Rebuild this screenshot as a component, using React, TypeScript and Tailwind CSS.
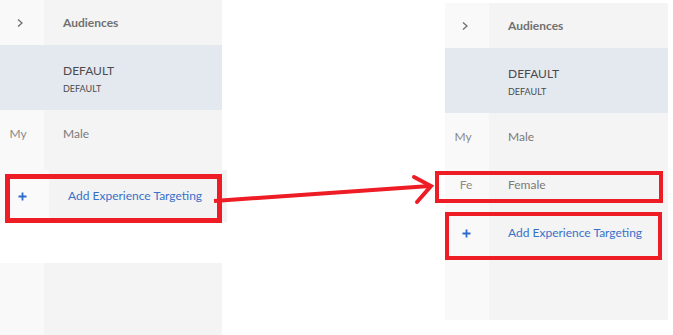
import React from "react";

const font = { fontFamily: "Lato, 'Open Sans', sans-serif" };

function Row({
  h,
  left,
  right,
  bg,
  leftBg = "bg-[#f9f9f9]",
  rightBg = "bg-[#f4f4f4]",
  leftW = "w-[44px]",
}: {
  h: string;
  left?: React.ReactNode;
  right?: React.ReactNode;
  bg?: string;
  leftBg?: string;
  rightBg?: string;
  leftW?: string;
}) {
  return (
    <div className={`flex ${h} ${bg ?? ""}`}>
      <div className={`${leftW} shrink-0 flex items-center justify-center ${bg ? "" : leftBg}`}>{left}</div>
      <div className={`flex-1 flex items-center pl-[19px] ${bg ? "" : rightBg}`}>{right}</div>
    </div>
  );
}

function Chevron() {
  return (
    <svg width="8" height="10" viewBox="0 0 8 10" className="text-[#6e6e6e]">
      <path d="M2 1.5 L6 5 L2 8.5" fill="none" stroke="currentColor" strokeWidth="1.3" />
    </svg>
  );
}

function Plus() {
  return (
    <svg width="9" height="9" viewBox="0 0 9 9">
      <path d="M4.5 0.5 V8.5 M0.5 4.5 H8.5" stroke="#2f6bcc" strokeWidth="1.8" />
    </svg>
  );
}

function DefaultRow() {
  return (
    <div className="flex h-[65px] bg-[#e4e9f0]">
      <div className="w-[44px] shrink-0" />
      <div className="flex flex-col justify-center pl-[19px] pt-[2px]">
        <span className="text-[12px] leading-[16px] text-[#4b4b4b]">DEFAULT</span>
        <span className="text-[9px] leading-[13px] mt-[3px] text-[#4b4b4b]">DEFAULT</span>
      </div>
    </div>
  );
}

export default function App() {
  return (
    <div className="relative w-[673px] h-[335px] bg-white overflow-hidden" style={font}>
      <div className="flex">
        {/* Left panel */}
        <div className="w-[222px] h-[335px] flex flex-col">
          <Row
            h="h-[45px]"
            left={<span className="pr-[4px]"><Chevron /></span>}
            right={<span className="text-[12px] font-bold text-[#707070]">Audiences</span>}
          />
          <DefaultRow />
          <Row
            h="h-[48px]"
            left={<span className="text-[12px] text-[#8a8a8a] pr-[8px]">My</span>}
            right={<span className="text-[12px] text-[#7a7a7a]">Male</span>}
          />
          <Row h="h-[12px]" />
          <div className="flex h-[58px] w-[227px] pb-[6px]">
            <div className="w-[49px] shrink-0 bg-[#fafafa] flex items-center justify-center pr-[4px]">
              <Plus />
            </div>
            <div className="flex-1 bg-[#f3f3f3] flex items-center pl-[19px]">
              <span className="text-[12px] text-[#3a70c9]">Add Experience Targeting</span>
            </div>
          </div>
          <div className="h-[35px] bg-white" />
          <div className="flex-1 flex">
            <div className="w-[44px] bg-[#f9f9f9]" />
            <div className="flex-1 bg-[#f4f4f4]" />
          </div>
        </div>

        {/* Right panel */}
        <div className="ml-[223px] mt-[3px] w-[223px] h-[317px] flex flex-col">
          <Row
            h="h-[45px]"
            left={<span className="pr-[4px]"><Chevron /></span>}
            right={<span className="text-[12px] font-bold text-[#707070]">Audiences</span>}
          />
          <DefaultRow />
          <Row
            h="h-[48px]"
            left={<span className="text-[12px] text-[#8a8a8a] pr-[8px]">My</span>}
            right={<span className="text-[12px] text-[#7a7a7a]">Male</span>}
          />
          <Row
            h="h-[48px]"
            left={<span className="text-[12px] text-[#8a8a8a] pr-[2px]">Fe</span>}
            right={<span className="text-[12px] text-[#7a7a7a]">Female</span>}
          />
          <Row
            h="h-[48px]"
            left={<span className="pr-[2px]"><Plus /></span>}
            right={<span className="text-[12px] text-[#3a70c9]">Add Experience Targeting</span>}
          />
          <div className="flex-1 flex">
            <div className="w-[44px] bg-[#f9f9f9]" />
            <div className="flex-1 bg-[#f4f4f4]" />
          </div>
        </div>
      </div>

      {/* Annotations */}
      <div className="absolute left-[5px] top-[174px] w-[217px] h-[49px] border-[5px] border-[#ee1c25]" />
      <div className="absolute left-[435px] top-[171px] w-[228px] h-[32px] border-[4px] border-[#ee1c25]" />
      <div className="absolute left-[445px] top-[212px] w-[217px] h-[48px] border-[4px] border-[#ee1c25]" />
      <svg className="absolute left-0 top-0" width="673" height="335">
        <path d="M214 201 L430 186" stroke="#ee1c25" strokeWidth="4" fill="none" />
        <path d="M414 177 L431 186 L417 202" stroke="#ee1c25" strokeWidth="4" fill="none" strokeLinecap="round" />
      </svg>
    </div>
  );
}
